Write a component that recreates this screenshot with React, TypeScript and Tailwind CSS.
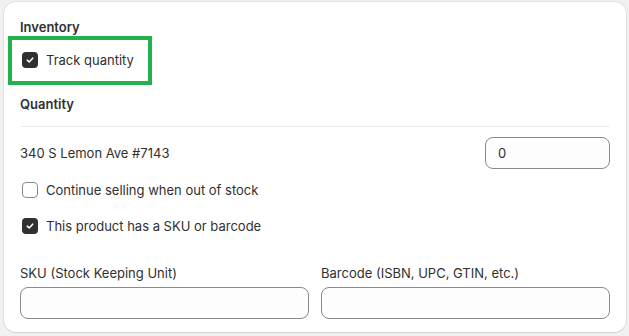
import React from 'react';

function Checkbox({ checked }: { checked: boolean }) {
  if (checked) {
    return (
      <span className="flex h-4 w-4 shrink-0 items-center justify-center rounded-[4px] bg-[#303030]">
        <svg width="10" height="10" viewBox="0 0 10 10" fill="none">
          <path d="M2.3 5.2 4.2 7 7.7 3.2" stroke="#fff" strokeWidth="1.6" strokeLinecap="round" strokeLinejoin="round" />
        </svg>
      </span>
    );
  }
  return <span className="h-4 w-4 shrink-0 rounded-[4px] border border-[#8a8a8a] bg-white" />;
}

function CheckRow({ checked, label, className }: { checked: boolean; label: string; className?: string }) {
  return (
    <label className={`flex h-5 items-center gap-2 pl-[2px] ${className ?? ''}`}>
      <Checkbox checked={checked} />
      <span>{label}</span>
    </label>
  );
}

function Field({ label }: { label: string }) {
  return (
    <div className="flex flex-col">
      <span className="h-5 leading-5">{label}</span>
      <div className="mt-1 h-8 rounded-lg border border-[#8a8a8a] bg-[#fdfdfd]" />
    </div>
  );
}

export default function App() {
  return (
    <div className="h-[336px] w-[629px] overflow-hidden bg-[#f1f1f1] pl-1 pt-[2px] font-['Inter',sans-serif] text-[13px] leading-5 text-[#303030]">
      <div className="relative w-[622px] rounded-xl bg-white px-4 pb-[13px] pt-[15px] shadow-[0_0_0_1px_rgba(0,0,0,0.06),0_1px_1px_rgba(0,0,0,0.08)]">
        <h2 className="h-5 font-semibold">Inventory</h2>
        <CheckRow checked label="Track quantity" className="mt-[13px]" />
        <h3 className="mt-6 h-5 font-semibold">Quantity</h3>
        <div className="mt-3 h-px bg-[#ebebeb]" />
        <div className="mt-[10px] flex items-center justify-between">
          <span>340 S Lemon Ave #7143</span>
          <div className="flex h-8 w-[125px] items-center rounded-lg border border-[#8a8a8a] bg-[#fdfdfd] px-3">0</div>
        </div>
        <CheckRow checked={false} label="Continue selling when out of stock" className="mt-[11px]" />
        <CheckRow checked label="This product has a SKU or barcode" className="mt-4" />
        <div className="mt-[27px] grid grid-cols-2 gap-3">
          <Field label="SKU (Stock Keeping Unit)" />
          <Field label="Barcode (ISBN, UPC, GTIN, etc.)" />
        </div>
        <div className="pointer-events-none absolute left-1 top-[34px] h-[49px] w-[144px] border-4 border-[#22b14c]" />
      </div>
    </div>
  );
}
